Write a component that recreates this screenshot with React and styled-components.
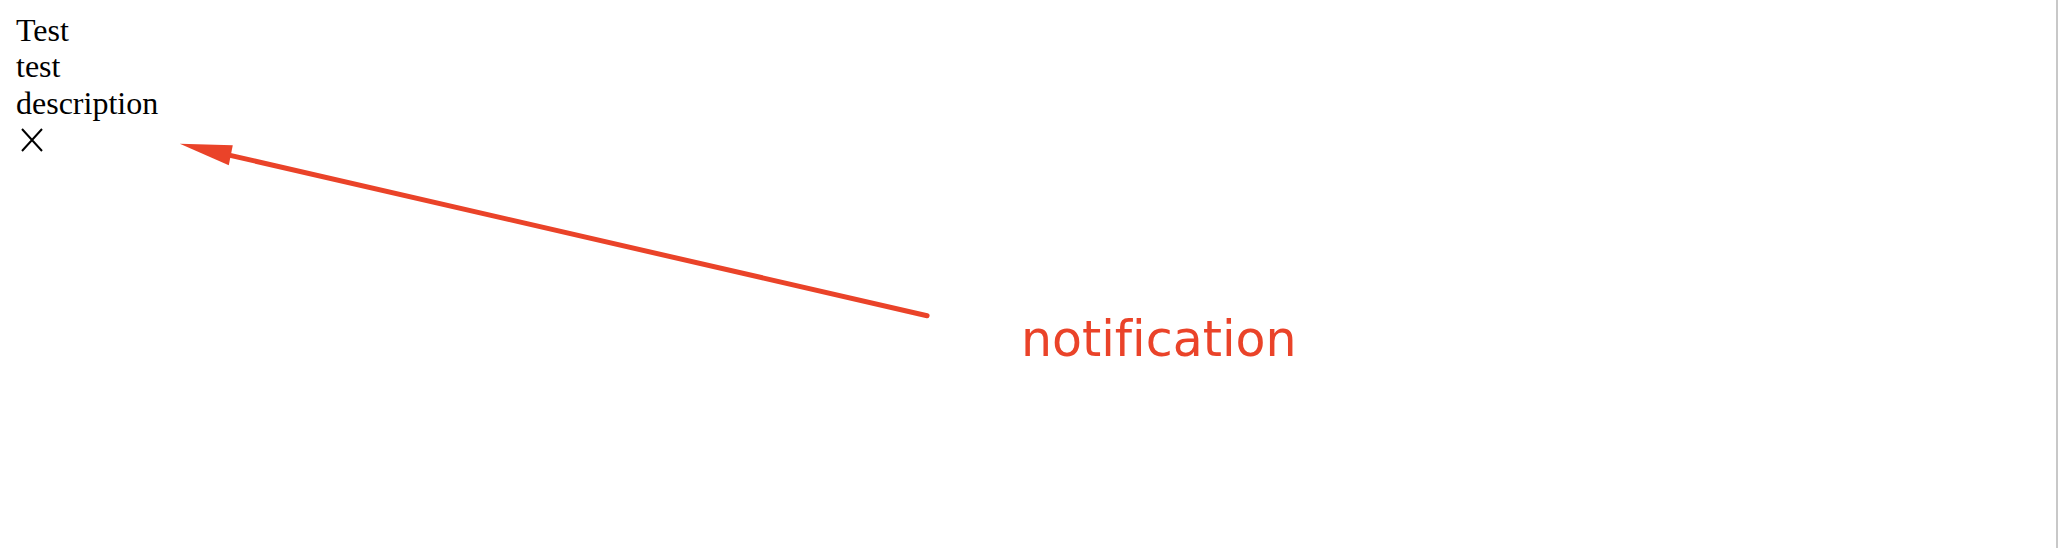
import React from "react";
import styled, { createGlobalStyle } from "styled-components";

const GlobalStyle = createGlobalStyle`
  html, body {
    margin: 0;
    padding: 0;
    background: #fff;
  }
  body {
    font-family: "Liberation Serif", "Times New Roman", serif;
    font-size: 32px;
    color: #000;
  }
`;

const Page = styled.div`
  position: relative;
  box-sizing: border-box;
  width: 100%;
  height: 100vh;
  padding: 12px 16px 16px;
  border-right: 2px solid #c8c8c8;
  overflow: hidden;
`;

const Notification = styled.div`
  display: flex;
  flex-direction: column;
  align-items: flex-start;
  line-height: 36.4px;
`;

const Line = styled.div`
  white-space: nowrap;
`;

const CloseButton = styled.button`
  display: flex;
  align-items: center;
  justify-content: center;
  padding: 0;
  margin: 7px 0 0 5px;
  border: none;
  background: none;
  cursor: pointer;
  width: 22px;
  height: 24px;
  svg {
    display: block;
  }
`;

const Annotation = styled.svg`
  position: absolute;
  left: 0;
  top: 0;
  width: 100%;
  height: 100%;
  pointer-events: none;
`;

const Label = styled.span`
  position: absolute;
  left: 1021px;
  top: 315px;
  font-family: "DejaVu Sans", Verdana, sans-serif;
  font-size: 49px;
  line-height: 49px;
  font-variant-ligatures: none;
  color: #ea4329;
  white-space: nowrap;
`;

const ACCENT = "#ea4329";

export default function App() {
  return (
    <Page>
      <GlobalStyle />
      <Notification>
        <Line>Test</Line>
        <Line>test</Line>
        <Line>description</Line>
        <CloseButton aria-label="close">
          <svg width="22" height="24" viewBox="0 0 22 24">
            <path
              d="M1 1 L21 23 M21 1 L1 23"
              stroke="#000"
              strokeWidth="2"
              fill="none"
            />
          </svg>
        </CloseButton>
      </Notification>

      <Annotation viewBox="0 0 2058 548" preserveAspectRatio="xMinYMin meet">
        <line
          x1="928"
          y1="316"
          x2="226"
          y2="154.5"
          stroke={ACCENT}
          strokeWidth="5"
          strokeLinecap="round"
        />
        <polygon points="180,144 233,145.5 229,165.5" fill={ACCENT} />
      </Annotation>
      <Label>notification</Label>
    </Page>
  );
}
